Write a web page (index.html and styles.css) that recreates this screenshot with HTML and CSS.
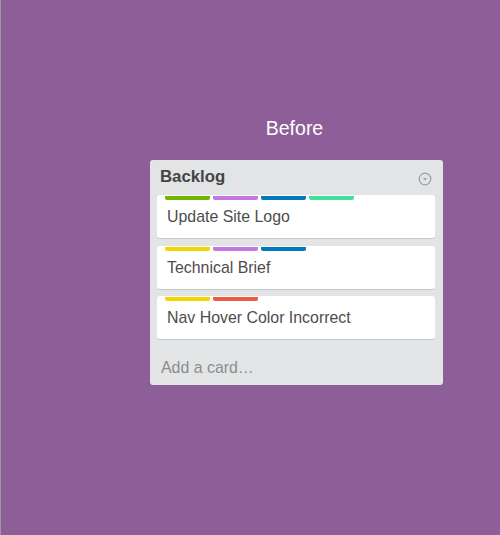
FILE: index.html
```html
<!DOCTYPE html>
<html lang="en">
<head>
    <meta charset="UTF-8">
    <title>Before</title>
    <link rel="stylesheet" href="styles.css">
</head>
<body>
    <div class="board">
        <div class="column">
            <!-- Nadpis nad seznamem -->
            <h2 class="stage">Before</h2>

            <div class="list">
                <div class="list-header">
                    <span class="list-title">Backlog</span>
                    <svg class="list-menu" width="14" height="14" viewBox="0 0 14 14">
                        <circle cx="7" cy="7" r="5.8" fill="none" stroke="#a0a0a0" stroke-width="1.3"/>
                        <path d="M4.8 6 L9.2 6 L7 8.6 Z" fill="#a0a0a0"/>
                    </svg>
                </div>

                <div class="cards">
                    <div class="card">
                        <div class="labels">
                            <span class="label green"></span>
                            <span class="label purple"></span>
                            <span class="label blue"></span>
                            <span class="label lime"></span>
                        </div>
                        <div class="card-title">Update Site Logo</div>
                    </div>
                    <div class="card">
                        <div class="labels">
                            <span class="label yellow"></span>
                            <span class="label purple"></span>
                            <span class="label blue"></span>
                        </div>
                        <div class="card-title">Technical Brief</div>
                    </div>
                    <div class="card">
                        <div class="labels">
                            <span class="label yellow"></span>
                            <span class="label red"></span>
                        </div>
                        <div class="card-title">Nav Hover Color Incorrect</div>
                    </div>
                </div>

                <div class="add-card">Add a card…</div>
            </div>
        </div>
    </div>
</body>
</html>
```
FILE: styles.css
```css
/* Globální styl */
body {
    margin: 0;
    background-color: #8d5e97;
    font-family: "Liberation Sans", Arial, sans-serif;
}

.board {
    height: 535px;
    box-sizing: border-box;
    border-left: 1px solid #9a9a9a;
    padding: 115px 0 0 149px;
}

.column {
    width: 293px;
}

/* Nadpis */
.stage {
    margin: 0 0 19px;
    color: white;
    font-size: 19.5px;
    font-weight: normal;
    text-align: center;
    line-height: 26px;
    text-indent: -4px;
}

/* Seznam */
.list {
    background-color: #e2e4e6;
    border-radius: 3px;
    padding-bottom: 7px;
}

.list-header {
    display: flex;
    justify-content: space-between;
    align-items: center;
    padding: 7px 11px 8px 10px;
}

.list-title {
    color: #444;
    font-size: 16.8px;
    font-weight: bold;
    line-height: 20px;
}

.list-menu {
    margin-top: 4px;
}

.cards {
    display: flex;
    flex-direction: column;
    gap: 7.5px;
    padding: 0 8px 0 7px;
}

.card {
    background-color: white;
    border-radius: 3px;
    box-shadow: 0 1px 0 #c4c9cc;
    padding: 1px 10px 0 8px;
    height: 43px;
    box-sizing: border-box;
}

.labels {
    display: flex;
    gap: 3px;
    height: 4px;
}

.label {
    width: 45px;
    height: 4px;
    border-radius: 0 0 2px 2px;
}

.green { background-color: #70b500; }
.purple { background-color: #c377e0; }
.blue { background-color: #0079bf; }
.lime { background-color: #3ee29c; }
.yellow { background-color: #f2d600; }
.red { background-color: #eb5a46; }

.card-title {
    color: #4d4d4d;
    font-size: 15.9px;
    line-height: 20px;
    padding: 7px 0 0 2px;
}

.add-card {
    color: #8c8c8c;
    font-size: 15.9px;
    line-height: 20px;
    padding: 19px 10px 0 11px;
}
```
